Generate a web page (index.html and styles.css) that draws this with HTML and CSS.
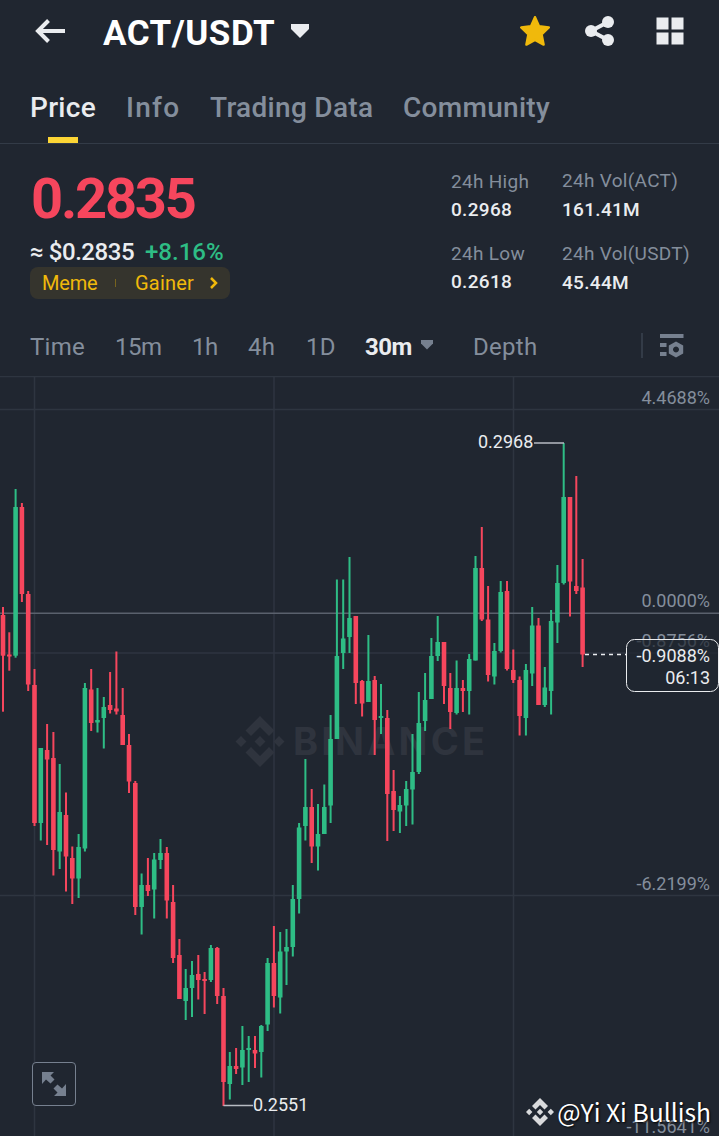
FILE: index.html
```
<!DOCTYPE html>
<html lang="en">
<head>
  <meta charset="UTF-8" />
  <meta name="viewport" content="width=device-width, initial-scale=1" />
  <title>ACT/USDT</title>
  <link rel="stylesheet" href="styles.css">
</head>
<body>

  <header class="header">
    <svg class="back" width="30" height="24" viewBox="0 0 30 24">
      <path d="M13.5 1.5L3 12l10.5 10.5M3 12h27" fill="none" stroke="#eaecef" stroke-width="4" />
    </svg>
    <h1 class="pair">ACT/USDT</h1>
    <svg class="pair-caret" width="18" height="14" viewBox="0 0 18 14">
      <path d="M0 0h18v5L9 14 0 5z" fill="#eaecef" />
    </svg>
    <div class="actions">
      <svg width="30" height="30" viewBox="0 0 30 30">
        <path d="M15 1.2l4 9.1 9.8 1.2-7.2 6.8 2 10.3L15 24l-8.6 4.600 2-10.300L1.200 11.500 11 10.300z" fill="#f0b90b" stroke="#f0b90b" stroke-width="2.400" stroke-linejoin="round" />
      </svg>
      <svg width="29" height="30" viewBox="0 0 29 30">
        <path d="M23 6L6 15l17 9" fill="none" stroke="#eaecef" stroke-width="4" />
        <circle cx="6" cy="15" r="6" fill="#eaecef" />
        <circle cx="23" cy="6" r="6" fill="#eaecef" />
        <circle cx="23" cy="24" r="6" fill="#eaecef" />
      </svg>
      <svg width="28" height="28" viewBox="0 0 28 28">
        <path d="M.5.500h12v12H.5zM15.500.500h12v12h-12zM.5 15.500h12v12H.5zM15.500 15.500h12v12h-12z" fill="#eaecef" />
      </svg>
    </div>
  </header>

  <nav class="tabs">
    <span class="tab active">Price</span>
    <span class="tab info">Info</span>
    <span class="tab">Trading Data</span>
    <span class="tab">Community</span>
  </nav>

  <section class="summary">
    <div class="quote">
      <div class="price">0.2835</div>
      <div class="fiat"><span class="usd">≈ $0.2835</span><span class="change">+8.16%</span></div>
      <div class="tags">
        <span class="tag-meme">Meme</span>
        <i class="tag-sep"></i>
        <span class="tag-gainer">Gainer</span>
        <svg width="8" height="12" viewBox="0 0 8 12">
          <path d="M1 1l5 5-5 5" fill="none" stroke="#f0b90b" stroke-width="2.500" />
        </svg>
      </div>
    </div>
    <div class="stats">
      <div class="label">24h High</div>
      <div class="value">0.2968</div>
      <div class="label">24h Low</div>
      <div class="value">0.2618</div>
    </div>
    <div class="stats volume">
      <div class="label">24h Vol(ACT)</div>
      <div class="value">161.41M</div>
      <div class="label">24h Vol(USDT)</div>
      <div class="value">45.44M</div>
    </div>
  </section>

  <div class="intervals">
    <span>Time</span>
    <span class="tight">15m</span>
    <span class="tight">1h</span>
    <span>4h</span>
    <span>1D</span>
    <span class="selected">30m
      <svg width="14" height="10" viewBox="0 0 14 10"><path d="M1 0h12v3.500L7 9.500 1 3.500z" fill="#76808f" /></svg>
    </span>
    <span>Depth</span>
    <span class="settings">
      <svg width="24" height="25" viewBox="0 0 24 25" fill="#76808f">
        <path d="M0 1h23.500v4H0zM0 10h6.500v4H0zM0 19h6.500v4H0z" />
        <path fill-rule="evenodd" d="M16 8.500l7.200 4v8L16 24.500l-7.200-4v-8zM16 13.500a3 3 0 1 0 .01 0z" />
      </svg>
    </span>
  </div>

  <main class="chart">
    <svg class="plot" width="719" height="760" viewBox="0 376 719 760">
      <g class="grid">
        <path d="M0 376.500H719M0 409.500H719M0 653H719M0 895.500H719M34.500 376V1136M274 376V1136M513.500 376V1136" />
        <path class="zero" d="M0 613.200H719" />
      </g>

      <g class="brand">
        <path d="M260 716l14.500 14.500-5.500 5.500-9-9-9 9-5.500-5.500zM260 767l14.500-14.500-5.500-5.500-9 9-9-9-5.500 5.500zM241 736l5.500 5.500-5.500 5.500-5.500-5.500zM279 736l5.500 5.500-5.500 5.500-5.500-5.500zM260 736l5.500 5.500-5.500 5.500-5.500-5.500z" />
        <text x="293" y="755" textLength="192">BINANCE</text>
      </g>

      <g class="scale">
        <text x="710" y="404">4.4688%</text>
        <text x="710" y="607">0.0000%</text>
        <text x="710" y="647">-0.8756%</text>
        <text x="710" y="890">-6.2199%</text>
        <text x="710" y="1133">-11.5641%</text>
      </g>

      <g id="candles"></g>

      <path class="leader" d="M534 443H564M223.500 1105.500H253" />
      <text class="mark" x="478" y="448">0.2968</text>
      <text class="mark" x="253" y="1111">0.2551</text>

      <path class="last-line" d="M585 654.500H626" />
      <rect class="last-box" x="626.500" y="639.500" width="92" height="52" rx="8" />
      <text class="mark last" x="710" y="662">-0.9088%</text>
      <text class="mark last" x="710" y="684">06:13</text>
    </svg>

    <button class="fullscreen">
      <svg width="24" height="24" viewBox="0 0 24 24">
        <path d="M0 0h12L8.500 3.500l4 4-4 4-4.500-4L0 12zM24 24H12l3.500-3.500-4-4 4-4 4.500 4L24 12z" fill="#76808f" />
      </svg>
    </button>

    <div class="author">
      <svg width="28" height="28" viewBox="0 0 28 28" fill="#d9dadc">
        <path d="M14 0l8 8-3.500 3.500L14 7l-4.500 4.500L6 8zM14 28l8-8-3.500-3.500L14 21l-4.500-4.500L6 20zM3.200 10.800L6.400 14l-3.200 3.200L0 14zM24.800 10.800L28 14l-3.200 3.200-3.200-3.200zM14 10.800l3.200 3.200-3.200 3.200-3.200-3.200z" />
      </svg>
      <span>@Yi Xi Bullish</span>
    </div>
  </main>

  <script src="chart.js"></script>
</body>
</html>
```

FILE: styles.css
```
* {
  box-sizing: border-box;
  margin: 0;
  padding: 0;
}
body {
  width: 719px;
  height: 1136px;
  overflow: hidden;
  background: #202630;
  color: #eaecef;
  font-family: Roboto, "Liberation Sans", sans-serif;
}
svg {
  display: block;
}
.header {
  display: flex;
  align-items: center;
  height: 80px;
  padding: 0 35px 18px;
}
.pair {
  width: 172px;
  margin: 6px 16px 0 38px;
  color: #fff;
  font-size: 35px;
  line-height: 42px;
  font-weight: 700;
  letter-spacing: 0.5px;
  white-space: nowrap;
}
.actions {
  display: flex;
  align-items: center;
  gap: 35px;
  margin-left: auto;
}
.actions svg:last-child {
  margin-left: 7px;
}
.tabs {
  display: grid;
  grid-template-columns: 96px 84px 193px auto;
  height: 64px;
  padding-left: 30px;
  border-bottom: 1px solid #333b47;
}
.tab {
  position: relative;
  padding-top: 11px;
  color: #848e9c;
  font-size: 28px;
  line-height: 33px;
  font-weight: 500;
  letter-spacing: 0.3px;
  white-space: nowrap;
}
.tab.info {
  letter-spacing: 1.3px;
}
.tab.active {
  color: #eaecef;
}
.tab.active::after {
  content: "";
  position: absolute;
  left: 18px;
  bottom: 0;
  width: 30px;
  height: 6px;
  background: #fcd535;
}
.summary {
  display: grid;
  grid-template-columns: 421px 111px auto;
  height: 173px;
  padding-left: 30px;
}
.price {
  margin: 22px 0 0 1px;
  color: #f6465d;
  font-size: 56px;
  line-height: 66px;
  font-weight: 700;
  letter-spacing: -2.2px;
}
.fiat {
  display: flex;
  gap: 11px;
  margin-top: 6px;
  font-size: 24px;
  line-height: 28px;
  font-weight: 500;
}
.usd {
  width: 104px;
  letter-spacing: -0.45px;
  white-space: nowrap;
}
.change {
  color: #2ebd85;
}
.tags {
  display: flex;
  align-items: center;
  width: 200px;
  height: 32px;
  margin-top: 1px;
  padding: 0 12px;
  border-radius: 8px;
  background: #35342d;
  color: #f0b90b;
  font-size: 20px;
}
.tag-meme {
  width: 73px;
  letter-spacing: -0.2px;
}
.tag-sep {
  width: 1px;
  height: 8px;
  background: #77631e;
}
.tag-gainer {
  width: 75px;
  padding-left: 19px;
  margin-right: 19px;
  letter-spacing: 0.2px;
}
.stats {
  padding-top: 26px;
  font-size: 19px;
  line-height: 24px;
}
.volume {
  padding-top: 25px;
}
.volume .value {
  margin: 5px 0 20px;
}
.label {
  color: #848e9c;
  letter-spacing: 0.3px;
}
.value {
  margin: 4px 0 20px;
  font-weight: 500;
  letter-spacing: 0.3px;
}
.intervals {
  display: grid;
  grid-template-columns: 85px 77px 56px 58px 59px 108px 1fr auto;
  align-items: center;
  height: 59px;
  padding: 0 35px 0 30px;
  color: #848e9c;
  font-size: 24px;
  letter-spacing: 0.3px;
}
.tight {
  letter-spacing: -0.5px;
}
.selected {
  display: flex;
  align-items: center;
  gap: 8px;
  color: #eaecef;
  font-weight: 700;
  letter-spacing: -0.5px;
}
.selected svg {
  margin-bottom: 3px;
}
.settings {
  margin-bottom: 2px;
  padding-left: 17px;
  border-left: 2px solid #333b47;
}
.chart {
  position: relative;
  height: 760px;
  font-size: 18px;
}
.grid path {
  fill: none;
  stroke: #2e3540;
  stroke-width: 1.500;
}
.grid .zero {
  stroke: #5a616d;
}
.brand {
  fill: #2f343e;
  font-family: Inter, sans-serif;
  font-size: 38px;
  font-weight: 700;
}
.scale {
  fill: #848e9c;
  text-anchor: end;
}
.up {
  fill: #2ebd85;
}
.down {
  fill: #f6465d;
}
.mark {
  fill: #eaecef;
}
.last {
  text-anchor: end;
}
.leader {
  fill: none;
  stroke: #b7bbc2;
  stroke-width: 1.500;
}
.last-line {
  stroke: #eaecef;
  stroke-width: 1.300;
  stroke-dasharray: 4 4;
}
.last-box {
  fill: #202630;
  fill-opacity: 0.7;
  stroke: #eaecef;
}
.fullscreen {
  position: absolute;
  left: 32px;
  top: 686px;
  display: flex;
  align-items: center;
  justify-content: center;
  width: 44px;
  height: 44px;
  border: 1px solid #76808f;
  border-radius: 4px;
  background: #202630;
}
.author {
  position: absolute;
  right: 8px;
  bottom: 6px;
  display: flex;
  align-items: center;
  gap: 3px;
  height: 36px;
  color: #fff;
  font-family: "Noto Sans CJK SC", sans-serif;
  font-size: 24.7px;
  text-shadow: 1px 1px 2px #000;
  white-space: nowrap;
}
.author span {
  margin-bottom: 3px;
}
```

FILE: chart.js
```
// [direction, high, body top, body bottom, low] in chart units
const candles = [
  ["down", 607, 615, 655.7, 711.7], ["down", 632.3, 654.5, 656.5, 670.7],
  ["up", 489, 507, 655.7, 657.7], ["down", 503, 507, 594, 602],
  ["down", 591, 594, 684.5, 691], ["down", 669, 685, 823, 826],
  ["up", 748, 748, 823, 840.5], ["down", 724, 750, 759.5, 845],
  ["down", 732, 758, 850, 875.5], ["up", 764, 812, 851.5, 869],
  ["down", 792.5, 815, 856.5, 891.5], ["down", 846.5, 858, 878.5, 904],
  ["up", 834, 847, 878.5, 898], ["up", 683, 688, 848.5, 851.5],
  ["down", 669, 689.5, 723, 731], ["up", 688, 720, 722.5, 732.5],
  ["up", 697, 707, 718, 748.5], ["down", 672, 705, 710, 713.5],
  ["down", 651.5, 708.5, 711.5, 714.5], ["down", 688, 715, 745, 745],
  ["down", 734, 745, 781.5, 793], ["down", 781, 783, 907, 915],
  ["up", 873.5, 885, 907, 934.5], ["down", 858, 885, 891, 896],
  ["up", 853, 859.5, 889.5, 918.5], ["up", 839, 853, 860, 869],
  ["down", 847, 853, 900.5, 918.5], ["down", 885, 902, 958, 963],
  ["down", 939, 955, 999, 999], ["up", 969, 988, 1001, 1020],
  ["up", 961, 975, 988, 1017], ["down", 955, 974, 980, 999.5],
  ["down", 972, 979, 981, 1014], ["up", 945, 948, 980, 982],
  ["down", 947, 948, 996, 1004], ["down", 988, 996, 1082, 1106],
  ["up", 1052, 1066, 1084, 1099.5], ["down", 1048, 1066, 1069, 1074],
  ["up", 1026, 1050, 1067.5, 1085], ["up", 1036, 1048, 1050, 1082],
  ["down", 1036, 1050, 1053.5, 1068], ["up", 1025, 1026, 1052, 1077.5],
  ["up", 958, 963, 1024.5, 1031], ["down", 926, 963, 996, 1007.5],
  ["up", 932, 951.5, 997.5, 1013.5], ["up", 929, 947, 951.5, 985],
  ["up", 885, 899, 947, 956.5], ["up", 823, 827.5, 899, 913.5],
  ["up", 759, 807, 826, 840.5], ["down", 789, 807, 846.5, 863],
  ["up", 804, 834, 846.5, 870.5], ["up", 784.5, 807, 834, 834],
  ["up", 715, 739, 805.5, 823], ["up", 579.5, 656, 739, 739],
  ["up", 579.5, 638.5, 653, 669], ["up", 557, 618, 637, 653],
  ["down", 616, 616, 683, 704], ["down", 680, 681, 703.5, 716.5],
  ["up", 635, 681, 702, 702], ["down", 676, 680, 720, 755],
  ["up", 684, 716, 718, 734], ["down", 710, 718, 794, 841],
  ["down", 770, 791, 810, 831], ["up", 796, 805, 811.5, 833],
  ["up", 781, 789, 805.5, 826], ["up", 734, 772, 789.5, 824.5],
  ["up", 692, 723, 772, 774], ["up", 673, 700, 721, 731],
  ["up", 638, 656, 699, 699], ["up", 616, 642, 656, 661],
  ["down", 642, 642, 686, 704], ["down", 673, 688, 712, 729],
  ["up", 660.5, 688, 713, 714.5], ["down", 680, 688, 691, 712],
  ["up", 654, 659, 691, 714.5], ["up", 556, 568, 660.5, 660.5],
  ["down", 527, 568, 619.5, 621], ["down", 586, 619.5, 675, 681.5],
  ["up", 643, 651, 676.5, 684.5], ["up", 581, 592, 651, 652.5],
  ["down", 581, 591, 669, 670.5], ["down", 649.5, 670, 680, 683],
  ["down", 676.5, 680, 716, 735.5], ["up", 664, 670, 718, 735.5],
  ["up", 607, 625.5, 673.5, 686], ["down", 618, 625.5, 705, 705],
  ["up", 667, 687.5, 705, 707], ["up", 610, 621, 691, 714.5],
  ["up", 565, 583, 622.5, 643], ["up", 443, 497, 583, 584.5],
  ["down", 497, 497, 581.5, 616.5], ["down", 476, 586, 591, 594],
  ["down", 559, 587.5, 654.5, 667]
];

const step = 6.3;
const svgNS = "http://www.w3.org/2000/svg";
const layer = document.getElementById("candles");

function addRect(cls, x, y, width, height) {
  const rect = document.createElementNS(svgNS, "rect");
  rect.setAttribute("class", cls);
  rect.setAttribute("x", x);
  rect.setAttribute("y", y);
  rect.setAttribute("width", width);
  rect.setAttribute("height", height);
  layer.appendChild(rect);
}

candles.forEach(([dir, high, top, bottom, low], i) => {
  const x = 3 + i * step;
  addRect(dir, x - 1, high, 2, low - high);
  addRect(dir, x - 2.3, top, 4.6, bottom - top);
});
```
